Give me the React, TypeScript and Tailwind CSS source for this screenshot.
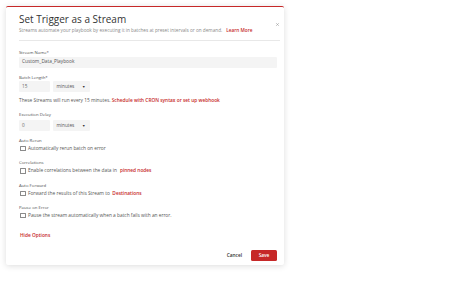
import { X } from "lucide-react";

function Label({ children }: { children: React.ReactNode }) {
  return (
    <div className="text-[4.3px] leading-[6px] font-medium text-[#4f4f4f]">
      {children}
    </div>
  );
}

function Check({ children }: { children: React.ReactNode }) {
  return (
    <label className="flex items-center gap-[2.5px] pl-[1px] text-[4.8px] leading-[7px] text-[#555]">
      <span className="h-[5.5px] w-[5.5px] shrink-0 rounded-[0.5px] border-[0.6px] border-[#8a8a8a] bg-white" />
      <span className="flex items-center">{children}</span>
    </label>
  );
}

function RedLink({ children, className }: { children: React.ReactNode; className?: string }) {
  return <span className={"font-semibold text-[#c62828] " + (className ?? "")}>{children}</span>;
}

function DurationRow({ value }: { value: string }) {
  return (
    <div className="flex gap-[2.5px]">
      <div className="flex h-[11px] w-[31px] items-center rounded-[1px] bg-[#f4f4f4] pl-[3px] text-[4.7px] text-[#666]">
        {value}
      </div>
      <div className="flex h-[11px] w-[37px] items-center justify-between rounded-[1px] bg-[#f4f4f4] pl-[4px] pr-[4px] text-[4.7px] text-[#555]">
        <span>minutes</span>
        <span className="text-[3.5px] text-[#333]">▼</span>
      </div>
    </div>
  );
}

export default function App() {
  return (
    <div className="h-[283px] w-[474px] bg-white font-['Open_Sans',sans-serif]">
      <div className="relative ml-[6px] flex h-[259px] w-[278px] translate-y-[6px] flex-col rounded-[2px] border-t-[1.5px] border-[#c62828] bg-white shadow-[0_1px_6px_rgba(0,0,0,0.14)]">
        <button className="absolute right-[4px] top-[14.5px] text-[#666]">
          <X size={5} strokeWidth={1.6} />
        </button>

        {/* Header */}
        <div className="ml-[13px] mr-[4px] pt-[5.5px]">
          <h1 className="text-[10px] leading-[12px] font-normal text-[#333]">
            Set Trigger as a Stream
          </h1>
          <p className="mt-[2px] text-[4.7px] leading-[6px] text-[#8a8a8a]">
            Streams automate your playbook by executing it in batches at preset intervals or on demand.
            <RedLink className="ml-[4px]">Learn More</RedLink>
          </p>
          <div className="mt-[7px] h-px bg-[#e8e8e8]" />
        </div>

        {/* Body */}
        <div className="flex flex-col pl-[13px] pr-[7px]">
          <div className="mt-[8.5px]">
            <Label>Stream Name*</Label>
          </div>
          <div className="mt-[1.5px] flex h-[11px] items-center rounded-[1px] bg-[#f4f4f4] pl-[3px] text-[4.8px] text-[#555]">
            Custom_Data_Playbook
          </div>

          <div className="mt-[6.7px]">
            <Label>Batch Length*</Label>
          </div>
          <div className="mt-[1px]">
            <DurationRow value="15" />
          </div>
          <p className="mt-[4.8px] text-[4.8px] leading-[7px] text-[#555]">
            These Streams will run every 15 minutes.{" "}
            <RedLink>Schedule with CRON syntax or set up webhook</RedLink>
          </p>

          <div className="mt-[7.5px]">
            <Label>Execution Delay</Label>
          </div>
          <div className="mt-[2.5px]">
            <DurationRow value="0" />
          </div>

          <div className="mt-[6.3px]">
            <Label>Auto Rerun</Label>
          </div>
          <div className="mt-[1.5px]">
            <Check>Automatically rerun batch on error</Check>
          </div>

          <div className="mt-[7.5px]">
            <Label>Correlations</Label>
          </div>
          <div className="mt-[2px]">
            <Check>
              Enable correlations between the data in
              <RedLink className="ml-[3px]">pinned nodes</RedLink>
            </Check>
          </div>

          <div className="mt-[7.7px]">
            <Label>Auto Forward</Label>
          </div>
          <div className="mt-[1.8px]">
            <Check>
              Forward the results of this Stream to
              <RedLink className="ml-[2.5px]">Destinations</RedLink>
            </Check>
          </div>

          <div className="mt-[7.5px]">
            <Label>Pause on Error</Label>
          </div>
          <div className="mt-[1.5px]">
            <Check>Pause the stream automatically when a batch fails with an error.</Check>
          </div>

          <div className="mt-[13.7px] pl-[1px] text-[4.8px] leading-[7px]">
            <RedLink>Hide Options</RedLink>
          </div>

          <div className="mt-[10.5px] flex items-center justify-end gap-[9px]">
            <button className="text-[4.8px] font-semibold text-[#333]">Cancel</button>
            <button className="flex h-[11px] w-[26px] items-center justify-center rounded-[1.5px] bg-[#c62828] text-[4.8px] font-semibold text-white">
              Save
            </button>
          </div>
        </div>
      </div>
    </div>
  );
}
